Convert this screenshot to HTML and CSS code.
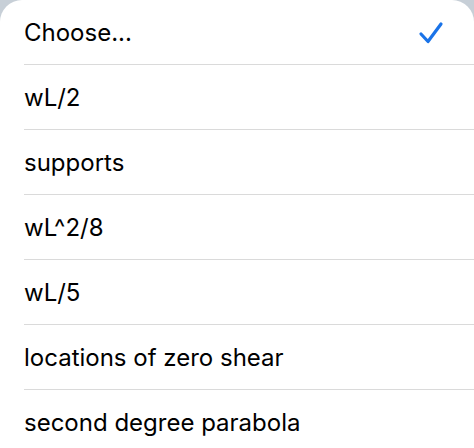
FILE: index.html
```html
<!DOCTYPE html>
<html lang="en">
<head>
    <meta charset="UTF-8">
    <meta name="viewport" content="width=device-width, initial-scale=1.0">
    <title>Choose</title>
    <link rel="stylesheet" href="styles.css">
</head>
<body>
    <ul class="picker">
        <li class="option selected">
            <span>Choose...</span>
            <svg class="check" width="26" height="24" viewBox="0 0 26 24">
                <path d="M3 13 L10 20.5 L23 3" fill="none" stroke="#1a73e8" stroke-width="3.2" stroke-linecap="round" stroke-linejoin="round"/>
            </svg>
        </li>
        <li class="option"><span>wL/2</span></li>
        <li class="option"><span>supports</span></li>
        <li class="option"><span>wL^2/8</span></li>
        <li class="option"><span>wL/5</span></li>
        <li class="option"><span>locations of zero shear</span></li>
        <li class="option"><span>second degree parabola</span></li>
    </ul>
</body>
</html>
```

FILE: styles.css
```css
html, body {
    height: 100%;
    overflow: hidden;
}

body {
    margin: 0;
    padding: 0;
    background: #c7cfd7;
    font-family: 'Inter', 'Liberation Sans', sans-serif;
    color: #000;
}

.picker {
    list-style: none;
    margin: 0;
    padding: 0;
    background: #fff;
    border-radius: 22px 22px 0 0;
}

.option {
    display: flex;
    align-items: center;
    justify-content: space-between;
    height: 65px;
    margin-left: 24px;
    padding-right: 30px;
    padding-top: 1px;
    border-bottom: 1px solid #dadada;
    box-sizing: border-box;
    font-size: 24px;
}

.option:last-child {
    height: 58px;
    padding-top: 7px;
    border-bottom: none;
}

.check {
    display: block;
}
```
